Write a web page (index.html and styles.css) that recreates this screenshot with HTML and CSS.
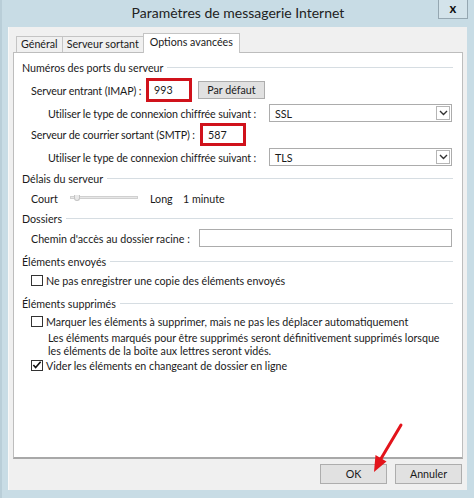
FILE: index.html
```html
<!DOCTYPE html>
<html lang="fr">
<head>
<meta charset="utf-8">
<title>Paramètres de messagerie Internet</title>
<link rel="stylesheet" href="styles.css">
</head>
<body>
<div class="window">
  <div class="titlebar">
    <div class="title">Paramètres de messagerie Internet</div>
    <div class="close">x</div>
  </div>
  <div class="client">
    <div class="tabs">
      <div class="tab">Général</div>
      <div class="tab">Serveur sortant</div>
      <div class="tab active">Options avancées</div>
    </div>
    <div class="panel">
      <div class="group g1"><span>Numéros des ports du serveur</span><i class="rule"></i></div>
      <div class="row r-imap lvl1">
        <span class="lbl tight w-imap">Serveur entrant (IMAP) :</span>
        <div class="port hl">993</div>
        <div class="btn small">Par défaut</div>
      </div>
      <div class="row r-ssl lvl2">
        <span class="lbl tight">Utiliser le type de connexion chiffrée suivant :</span>
        <div class="select"><span>SSL</span><span class="arrow"><svg width="9" height="6" viewBox="0 0 9 6"><path d="M1 1 L4.5 4.5 L8 1" fill="none" stroke="#333" stroke-width="1.4"/></svg></span></div>
      </div>
      <div class="row r-smtp lvl1">
        <span class="lbl tight w-smtp">Serveur de courrier sortant (SMTP) :</span>
        <div class="port hl">587</div>
      </div>
      <div class="row r-tls lvl2">
        <span class="lbl tight">Utiliser le type de connexion chiffrée suivant :</span>
        <div class="select"><span>TLS</span><span class="arrow"><svg width="9" height="6" viewBox="0 0 9 6"><path d="M1 1 L4.5 4.5 L8 1" fill="none" stroke="#333" stroke-width="1.4"/></svg></span></div>
      </div>
      <div class="group g2"><span>Délais du serveur</span><i class="rule"></i></div>
      <div class="row r-slider lvl1">
        <span class="lbl w-court">Court</span>
        <div class="slider"><span class="track"></span><span class="thumb"></span></div>
        <span class="lbl w-long">Long</span>
        <span class="lbl">1 minute</span>
      </div>
      <div class="group g3"><span>Dossiers</span><i class="rule"></i></div>
      <div class="row r-path lvl1">
        <span class="lbl">Chemin d'accès au dossier racine :</span>
        <div class="textbox"></div>
      </div>
      <div class="group g4"><span>Éléments envoyés</span><i class="rule"></i></div>
      <div class="row r-cb1 lvl1">
        <span class="cb"></span>
        <span class="lbl">Ne pas enregistrer une copie des éléments envoyés</span>
      </div>
      <div class="group g5"><span>Éléments supprimés</span><i class="rule"></i></div>
      <div class="row r-cb2 lvl1">
        <span class="cb"></span>
        <span class="lbl">Marquer les éléments à supprimer, mais ne pas les déplacer automatiquement</span>
      </div>
      <p class="note">Les éléments marqués pour être supprimés seront définitivement supprimés lorsque<br>les éléments de la boîte aux lettres seront vidés.</p>
      <div class="row r-cb3 lvl1">
        <span class="cb checked"><svg width="11" height="10" viewBox="0 0 11 10"><path d="M1.5 5 L4 7.8 L9.5 1.5" fill="none" stroke="#111" stroke-width="1.8"/></svg></span>
        <span class="lbl">Vider les éléments en changeant de dossier en ligne</span>
      </div>
    </div>
    <div class="buttons">
      <div class="btn big">OK</div>
      <div class="btn big">Annuler</div>
    </div>
  </div>
  <svg class="redarrow" width="474" height="498" viewBox="0 0 474 498">
    <line x1="401" y1="425" x2="379" y2="462" stroke="#e3141b" stroke-width="3" stroke-linecap="round"/>
    <polygon points="374,472 386.5,461.5 375.5,455" fill="#e3141b"/>
  </svg>
</div>
</body>
</html>
```
FILE: styles.css
```css
* { box-sizing: border-box; }
html, body { margin: 0; padding: 0; }
body {
  font-family: "Lato", "Noto Sans", sans-serif;
  font-size: 10.7px;
  color: #1a1a1a;
  background: #c8dce5;
}
.window {
  position: relative;
  width: 474px;
  height: 498px;
  background: #c8dce5;
  border-left: 2px solid #b9ced8;
  display: flex;
  flex-direction: column;
  overflow: hidden;
}
.titlebar {
  height: 27px;
  position: relative;
  display: flex;
  justify-content: center;
  align-items: center;
}
.title {
  font-size: 14px;
  color: #222;
  margin-top: -2px;
}
.close {
  position: absolute;
  right: 6px;
  top: 0;
  width: 30px;
  height: 19px;
  border: 1px solid #95a7b1;
  border-top: none;
  background: #d3e3ea;
  font-weight: bold;
  font-size: 13px;
  line-height: 16px;
  text-align: center;
  color: #111;
}
.client {
  margin: 0 7px 8px 6px;
  flex: 1;
  background: #f0f0f0;
  border-left: 1px solid #f8f8f8;
  padding: 6px 4px 0 4px;
  display: flex;
  flex-direction: column;
}
.tabs {
  display: flex;
  align-items: flex-end;
  height: 19px;
  padding-left: 3px;
}
.tab {
  height: 16px;
  border: 1px solid #c4c4c4;
  border-bottom: none;
  border-right: none;
  background: #f0f0f0;
  padding: 0 4px;
  line-height: 14px;
  color: #1a1a1a;
}
.tab.active {
  height: 20px;
  margin-bottom: -1px;
  background: #fff;
  border: 1px solid #c4c4c4;
  border-bottom: none;
  padding: 0 6px;
  line-height: 16px;
  position: relative;
  z-index: 1;
}
.panel {
  height: 407px;
  background: #fff;
  border: 1px solid #bdbdbd;
  border-bottom: 2px solid #a8a8a8;
  padding: 0 9px 0 8px;
  display: flex;
  flex-direction: column;
}
.group {
  display: flex;
  align-items: center;
  height: 16px;
  white-space: nowrap;
}
.group .rule {
  flex: 1;
  height: 1px;
  background: #d6dde2;
  margin-left: 4px;
}
.g1 { margin-top: 6px; }
.g2 { margin-top: 4px; }
.g3 { margin-top: 4px; }
.g4 { margin-top: 6px; }
.g5 { margin-top: 7px; }
.row {
  display: flex;
  align-items: center;
  white-space: nowrap;
}
.lvl1 { padding-left: 9px; }
.lvl2 { padding-left: 26px; }
.tight { letter-spacing: -0.12px; }
.r-imap { height: 24px; margin-top: 3px; }
.r-ssl { height: 18px; margin-top: 2px; }
.r-smtp { height: 23px; margin-top: 1px; }
.r-tls { height: 18px; margin-top: 2px; }
.r-slider { height: 16px; margin-top: 4px; }
.r-path { height: 18px; margin-top: 3px; }
.r-cb1 { height: 16px; margin-top: 3px; }
.r-cb2 { height: 16px; margin-top: 2px; }
.r-cb3 { height: 12px; margin-top: 2px; }
.w-imap { width: 115px; }
.w-smtp { width: 169px; }
.w-court { width: 39px; }
.w-long { width: 33px; }
.port {
  background: #fff;
  padding-left: 5px;
  line-height: 18px;
}
.hl {
  border: 3px solid #d0121b;
  width: 46px;
  height: 24px;
}
.r-smtp .hl { height: 23px; }
.btn {
  background: #e1e1e1;
  border: 1px solid #adadad;
  text-align: center;
  color: #1a1a1a;
}
.btn.small {
  width: 67px;
  height: 18px;
  line-height: 16px;
  margin-left: 6px;
}
.select {
  margin-left: auto;
  width: 183px;
  height: 18px;
  border: 1px solid #acacac;
  background: #fff;
  display: flex;
  align-items: center;
  padding-left: 5px;
  margin-right: 1px;
}
.select .arrow {
  margin-left: auto;
  width: 14px;
  height: 14px;
  margin-right: 1px;
  border: 1px solid #b5b5b5;
  display: flex;
  align-items: center;
  justify-content: center;
}
.slider {
  position: relative;
  width: 68px;
  height: 8px;
  margin-right: 12px;
}
.slider .track {
  position: absolute;
  left: 0; right: 0;
  top: 2px;
  height: 3px;
  background: #e7e7e7;
  border: 1px solid #d0d0d0;
}
.slider .thumb {
  position: absolute;
  left: 4px;
  top: 1px;
  width: 6px;
  height: 6px;
  background: #e9e9e9;
  border: 1px solid #c4c4c4;
  border-top: none;
  border-radius: 0 0 3px 3px;
}
.textbox {
  margin-left: auto;
  margin-right: 1px;
  width: 253px;
  height: 18px;
  border: 1px solid #acacac;
  background: #fff;
}
.cb {
  width: 12px;
  height: 11px;
  border: 1px solid #333;
  background: #fff;
  margin-right: 3px;
  display: flex;
  align-items: center;
  justify-content: center;
  flex: none;
}
.note {
  margin: 2px 0 0 0;
  padding-left: 26px;
  padding-right: 8px;
  line-height: 13px;
  white-space: nowrap;
}
.buttons {
  display: flex;
  justify-content: flex-end;
  gap: 8px;
  padding-top: 5px;
  padding-right: 1px;
}
.btn.big {
  width: 67px;
  height: 20px;
  line-height: 18px;
}
.redarrow {
  position: absolute;
  left: -2px;
  top: 0;
  pointer-events: none;
}
```
